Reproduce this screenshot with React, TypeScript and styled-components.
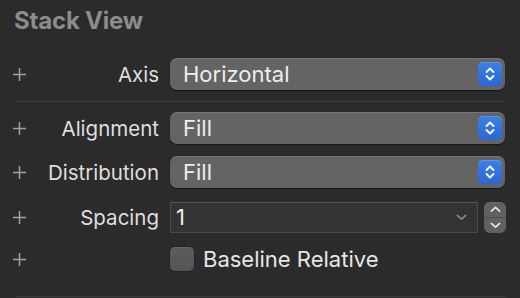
import React from "react"
import styled, { createGlobalStyle } from "styled-components"

const GlobalStyle = createGlobalStyle`
  html, body {
    margin: 0;
    padding: 0;
    background: #2b2b2b;
  }
  body {
    font-family: Inter, "Noto Sans", "Liberation Sans", sans-serif;
    -webkit-font-smoothing: antialiased;
  }
`

const Panel = styled.div`
  width: 520px;
  height: 298px;
  overflow: hidden;
  background: #2b2b2b;
`

const Title = styled.h2`
  margin: 0;
  padding: 0 14px;
  height: 44px;
  line-height: 42px;
  font-size: 24px;
  font-weight: 700;
  color: #8c8c8c;
  letter-spacing: -0.2px;
`

const Rows = styled.div`
  display: flex;
  flex-direction: column;
  padding: 14px 14px 0 0;
`

const Row = styled.div<{ $gap?: number; $h?: number }>`
  display: grid;
  grid-template-columns: 27px 121px 1fr;
  column-gap: 11px;
  align-items: center;
  height: ${(p) => p.$h ?? 32}px;
  margin-top: ${(p) => p.$gap ?? 0}px;
`

const Divider = styled.div<{ $top: number; $bottom?: number }>`
  height: 1px;
  background: #3e3e3e;
  margin: ${(p) => p.$top}px 0 ${(p) => p.$bottom ?? 0}px 16px;
`

const Label = styled.span`
  text-align: right;
  font-size: 20.5px;
  color: #dedede;
  white-space: nowrap;
`

const PlusWrap = styled.span`
  display: flex;
  justify-content: flex-end;
`

const Popup = styled.div`
  position: relative;
  height: 32px;
  border-radius: 7px;
  background: #646464;
  box-shadow: inset 0 1px 0 rgba(255, 255, 255, 0.12), 0 0.5px 1px rgba(0, 0, 0, 0.5);
  display: flex;
  align-items: center;
  padding-left: 13px;
  margin-right: 1px;
  font-size: 22px;
  color: #eeeeee;
`

const BlueButton = styled.span`
  position: absolute;
  right: 3px;
  top: 4px;
  width: 24px;
  height: 24px;
  border-radius: 5px;
  background: linear-gradient(#3d80e6, #2a67d4);
  box-shadow: inset 0 0.5px 0 rgba(255, 255, 255, 0.3);
  display: flex;
  align-items: center;
  justify-content: center;
`

const FieldLine = styled.div`
  display: flex;
  align-items: center;
  gap: 6px;
`

const TextField = styled.div`
  flex: 1;
  height: 31px;
  box-sizing: border-box;
  border: 1px solid #4a4a4a;
  border-top-color: #555555;
  background: #333333;
  display: flex;
  align-items: center;
  justify-content: space-between;
  padding: 0 10px 0 5px;
  font-size: 22px;
  color: #eeeeee;
`

const Stepper = styled.div`
  width: 22px;
  height: 31px;
  border-radius: 6px;
  background: #616161;
  display: flex;
  flex-direction: column;
  box-shadow: inset 0 0.5px 0 rgba(255, 255, 255, 0.12);
`

const StepHalf = styled.span<{ $top?: boolean }>`
  flex: 1;
  display: flex;
  align-items: center;
  justify-content: center;
  border-bottom: ${(p) => (p.$top ? "1px solid #4c4c4c" : "none")};
`

const CheckLine = styled.label`
  display: flex;
  align-items: center;
  gap: 9px;
  font-size: 22px;
  color: #e6e6e6;
`

const CheckBox = styled.span`
  width: 24px;
  height: 24px;
  border-radius: 5px;
  box-sizing: border-box;
  background: linear-gradient(#5c5c5c, #545454);
  box-shadow: inset 0 0.5px 0 rgba(255, 255, 255, 0.15), 0 0 0 0.5px rgba(0, 0, 0, 0.4);
`

const Plus = () => (
  <PlusWrap>
    <svg width="15" height="15" viewBox="0 0 15 15">
      <path d="M7.5 1v13M1 7.5h13" stroke="#a0a0a0" strokeWidth="1.5" />
    </svg>
  </PlusWrap>
)

const UpDown = () => (
  <svg width="12" height="16" viewBox="0 0 12 16">
    <path d="M2.5 6 6 2.5 9.5 6M2.5 10 6 13.5 9.5 10" fill="none" stroke="#fff" strokeWidth="1.8" strokeLinecap="round" strokeLinejoin="round" />
  </svg>
)

const Chevron = ({ up, color = "#e8e8e8", w = 12 }: { up?: boolean; color?: string; w?: number }) => (
  <svg width={w} height={w * 0.6} viewBox="0 0 12 7">
    <path d={up ? "M1.5 5.5 6 1.5 10.5 5.5" : "M1.5 1.5 6 5.5 10.5 1.5"} fill="none" stroke={color} strokeWidth="1.8" strokeLinecap="round" strokeLinejoin="round" />
  </svg>
)

const PopupRow = ({ label, value, gap }: { label: string; value: string; gap?: number }) => (
  <Row $gap={gap}>
    <Plus />
    <Label>{label}</Label>
    <Popup>
      {value}
      <BlueButton>
        <UpDown />
      </BlueButton>
    </Popup>
  </Row>
)

export default function App() {
  return (
    <Panel>
      <GlobalStyle />
      <Title>Stack View</Title>
      <Rows>
        <PopupRow label="Axis" value="Horizontal" />
        <Divider $top={11} $bottom={10} />
        <PopupRow label="Alignment" value="Fill" />
        <PopupRow label="Distribution" value="Fill" gap={12} />
        <Row $gap={13}>
          <Plus />
          <Label>Spacing</Label>
          <FieldLine>
            <TextField>
              1
              <Chevron color="#8a8a8a" w={11} />
            </TextField>
            <Stepper>
              <StepHalf $top>
                <Chevron up w={11} />
              </StepHalf>
              <StepHalf>
                <Chevron w={11} />
              </StepHalf>
            </Stepper>
          </FieldLine>
        </Row>
        <Row $gap={13} $h={24}>
          <Plus />
          <span />
          <CheckLine>
            <CheckBox />
            Baseline Relative
          </CheckLine>
        </Row>
        <Divider $top={26} />
      </Rows>
    </Panel>
  )
}
